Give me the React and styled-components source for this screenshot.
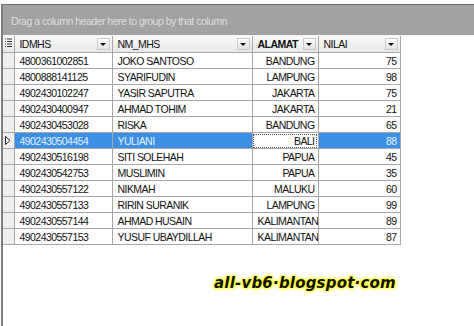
import React from 'react';
import styled, { createGlobalStyle } from 'styled-components';

const GlobalStyle = createGlobalStyle`
  html, body { margin: 0; padding: 0; background: #fff; }
  body { font-family: "Liberation Sans", Arial, sans-serif; }
`;

const Screen = styled.div`
  position: relative;
  width: 474px;
  height: 326px;
  overflow: hidden;
  background: #fff;
  padding-top: 4px;
  box-sizing: border-box;
`;

const Frame = styled.div`
  height: 100%;
  margin-left: 1px;
  border-left: 2px solid #7c7c7c;
  display: flex;
  flex-direction: column;
`;

const GroupPanel = styled.div`
  height: 31px;
  background: #a2a2a2;
  border-top: 1px solid #6e6e6e;
  color: #dedede;
  font-size: 10.5px;
  letter-spacing: -0.5px;
  display: flex;
  align-items: center;
  padding-left: 8px;
  padding-top: 1px;
  box-sizing: border-box;
`;

const GridArea = styled.div`
  flex: 1;
  background: #fff;
  border-top: 1px solid #f4f4f4;
`;

const Table = styled.table`
  border-collapse: collapse;
  table-layout: fixed;
  width: 397px;
  font-size: 10.5px;
  letter-spacing: -0.55px;
  color: #111;
`;

const HeadCell = styled.th`
  height: 16px;
  padding: 0 2px 0 5px;
  text-align: left;
  font-weight: ${p => (p.$bold ? 'bold' : 'normal')};
  background: linear-gradient(#fafafa, #e8e8e8);
  border-right: 1px solid #a7a7a7;
  border-bottom: 1px solid #a7a7a7;
  white-space: nowrap;
`;

const HeadInner = styled.div`
  display: flex;
  align-items: center;
  justify-content: space-between;
`;

const DropBtn = styled.span`
  width: 13px;
  height: 12px;
  background: linear-gradient(#fdfdfd, #e2e2e2);
  border: 1px solid #c9c9c9;
  display: flex;
  align-items: center;
  justify-content: center;
  box-sizing: border-box;
  flex-shrink: 0;
  &::after {
    content: '';
    border-left: 3px solid transparent;
    border-right: 3px solid transparent;
    border-top: 3px solid #111;
  }
`;

const IndicatorCell = styled.td`
  width: 11px;
  padding: 0;
  background: ${p => (p.$head ? 'linear-gradient(#fafafa, #e8e8e8)' : '#efefef')};
  border-right: 1px solid #a7a7a7;
  border-bottom: 1px solid #a7a7a7;
  text-align: center;
  vertical-align: middle;
`;

const Cell = styled.td`
  height: 15px;
  padding: 0 3px 0 5px;
  text-align: ${p => (p.$right ? 'right' : 'left')};
  border-right: 1px solid #a7a7a7;
  border-bottom: 1px solid #a7a7a7;
  white-space: nowrap;
  overflow: hidden;
  background: ${p => (p.$focus ? '#fff' : p.$sel ? '#3b8fe5' : '#fff')};
  color: ${p => (p.$focus ? '#111' : p.$sel ? '#e4f0fc' : '#111')};
  outline: ${p => (p.$focus ? '1px dotted #555' : 'none')};
  outline-offset: -2px;
`;

const Watermark = styled.div`
  position: absolute;
  left: 214px;
  top: 274px;
  font-family: "Comic Sans MS", "DejaVu Sans", sans-serif;
  font-style: italic;
  font-weight: bold;
  font-size: 15px;
  letter-spacing: 0.2px;
  color: #111;
  text-shadow: 0 0 2px #ffff00, 0 0 3px #ffff00, 0 0 4px #ffff40, 0 0 5px #ffff80;
`;

const rows = [
  ['4800361002851', 'JOKO SANTOSO', 'BANDUNG', 75],
  ['4800888141125', 'SYARIFUDIN', 'LAMPUNG', 98],
  ['4902430102247', 'YASIR SAPUTRA', 'JAKARTA', 75],
  ['4902430400947', 'AHMAD TOHIM', 'JAKARTA', 21],
  ['4902430453028', 'RISKA', 'BANDUNG', 65],
  ['4902430504454', 'YULIANI', 'BALI', 88],
  ['4902430516198', 'SITI SOLEHAH', 'PAPUA', 45],
  ['4902430542753', 'MUSLIMIN', 'PAPUA', 35],
  ['4902430557122', 'NIKMAH', 'MALUKU', 60],
  ['4902430557133', 'RIRIN SURANIK', 'LAMPUNG', 99],
  ['4902430557144', 'AHMAD HUSAIN', 'KALIMANTAN', 89],
  ['4902430557153', 'YUSUF UBAYDILLAH', 'KALIMANTAN', 87],
];

const SELECTED = 5;

function ListIcon() {
  return (
    <svg width="7" height="10" viewBox="0 0 7 10">
      {[1, 3.5, 6, 8.5].map(y => (
        <g key={y}>
          <rect x="0" y={y - 0.5} width="1" height="1" fill="#333" />
          <rect x="2" y={y - 0.5} width="5" height="1" fill="#333" />
        </g>
      ))}
    </svg>
  );
}

function RowArrow() {
  return (
    <svg width="6" height="9" viewBox="0 0 6 9">
      <path d="M0.5 0.5 L5 4.5 L0.5 8.5 Z" fill="#fff" stroke="#222" strokeWidth="1" />
    </svg>
  );
}

const columns = [
  { title: 'IDMHS', width: 98 },
  { title: 'NM_MHS', width: 140 },
  { title: 'ALAMAT', width: 66, bold: true },
  { title: 'NILAI', width: 82 },
];

export default function App() {
  return (
    <>
      <GlobalStyle />
      <Screen>
        <Frame>
          <GroupPanel>Drag a column header here to group by that column</GroupPanel>
          <GridArea>
            <Table>
              <colgroup>
                <col style={{ width: 11 }} />
                {columns.map(c => (
                  <col key={c.title} style={{ width: c.width }} />
                ))}
              </colgroup>
              <thead>
                <tr>
                  <IndicatorCell as="th" $head>
                    <ListIcon />
                  </IndicatorCell>
                  {columns.map(c => (
                    <HeadCell key={c.title} $bold={c.bold}>
                      <HeadInner>
                        <span>{c.title}</span>
                        <DropBtn />
                      </HeadInner>
                    </HeadCell>
                  ))}
                </tr>
              </thead>
              <tbody>
                {rows.map((r, i) => {
                  const sel = i === SELECTED;
                  return (
                    <tr key={r[0]}>
                      <IndicatorCell>{sel && <RowArrow />}</IndicatorCell>
                      <Cell $sel={sel}>{r[0]}</Cell>
                      <Cell $sel={sel}>{r[1]}</Cell>
                      <Cell $right $sel={sel} $focus={sel}>{r[2]}</Cell>
                      <Cell $right $sel={sel}>{r[3]}</Cell>
                    </tr>
                  );
                })}
              </tbody>
            </Table>
          </GridArea>
        </Frame>
        <Watermark>all-vb6·blogspot·com</Watermark>
      </Screen>
    </>
  );
}
